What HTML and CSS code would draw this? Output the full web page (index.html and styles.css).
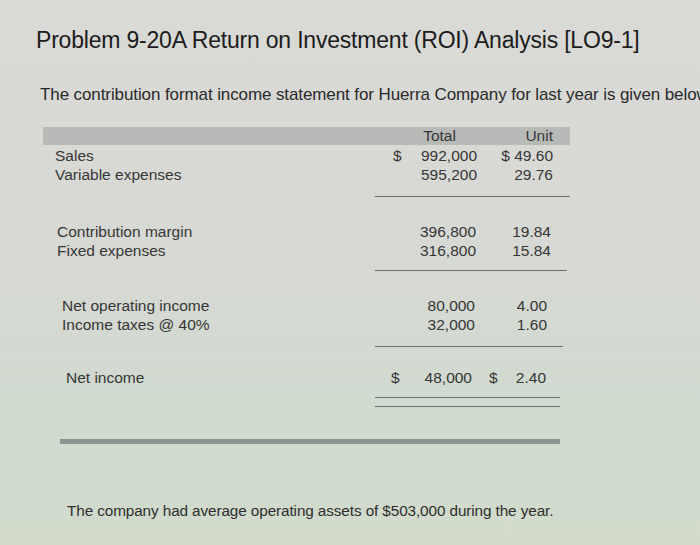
FILE: index.html
```html
<!DOCTYPE html>
<html lang="en">
<head>
<meta charset="utf-8">
<title>Problem 9-20A</title>
<link rel="stylesheet" href="styles.css">
</head>
<body>
<div class="page">
  <h1 class="title">Problem 9-20A Return on Investment (ROI) Analysis [LO9-1]</h1>
  <p class="intro">The contribution format income statement for Huerra Company for last year is given below:</p>

  <div class="statement">
    <div class="section s1">
      <div class="row head">
        <span class="label"></span>
        <span class="cur"></span>
        <span class="total center">Total</span>
        <span class="unit">Unit</span>
      </div>
      <div class="row">
        <span class="label">Sales</span>
        <span class="cur">$</span>
        <span class="total">992,000</span>
        <span class="unit">$ 49.60</span>
      </div>
      <div class="row">
        <span class="label">Variable expenses</span>
        <span class="cur"></span>
        <span class="total">595,200</span>
        <span class="unit">29.76</span>
      </div>
      <div class="rule r1"></div>
    </div>

    <div class="section s2">
      <div class="row">
        <span class="label">Contribution margin</span>
        <span class="cur"></span>
        <span class="total">396,800</span>
        <span class="unit">19.84</span>
      </div>
      <div class="row">
        <span class="label">Fixed expenses</span>
        <span class="cur"></span>
        <span class="total">316,800</span>
        <span class="unit">15.84</span>
      </div>
      <div class="rule r2"></div>
    </div>

    <div class="section s3">
      <div class="row">
        <span class="label">Net operating income</span>
        <span class="cur"></span>
        <span class="total">80,000</span>
        <span class="unit">4.00</span>
      </div>
      <div class="row">
        <span class="label">Income taxes @ 40%</span>
        <span class="cur"></span>
        <span class="total">32,000</span>
        <span class="unit">1.60</span>
      </div>
      <div class="rule r3"></div>
    </div>

    <div class="section s4">
      <div class="row">
        <span class="label">Net income</span>
        <span class="cur">$</span>
        <span class="total">48,000</span>
        <span class="unit split"><span>$</span><span>2.40</span></span>
      </div>
      <div class="rule double"></div>
    </div>

    <div class="thick"></div>
  </div>

  <p class="note">The company had average operating assets of $503,000 during the year.</p>
</div>
</body>
</html>
```

FILE: styles.css
```css
html, body {
  margin: 0;
  padding: 0;
  height: 100%;
  overflow: hidden;
}

body {
  background: linear-gradient(180deg, #d9d9d6 0%, #d8d9d5 35%, #d4d9d1 60%, #cfdbcf 80%, #d2dbcb 100%);
  font-family: "Liberation Sans", Arial, sans-serif;
  color: #2e2e2e;
}

.page {
  width: 700px;
  height: 545px;
  padding: 0;
  box-sizing: border-box;
}

.title {
  margin: 0;
  padding: 25px 0 0 36px;
  font-size: 23px;
  font-weight: normal;
  line-height: 30px;
  color: #1c1c1c;
  white-space: nowrap;
  letter-spacing: -0.2px;
}

.intro {
  margin: 0;
  padding: 30px 0 0 40px;
  font-size: 17px;
  line-height: 20px;
  color: #2a2a2a;
  white-space: nowrap;
  letter-spacing: -0.1px;
}

.statement {
  margin: 22px 0 0 43px;
  width: 527px;
  font-size: 15.5px;
  color: #363636;
}

.row {
  display: grid;
  grid-template-columns: 345px 14px 75px 76px 17px;
  height: 19px;
  line-height: 19px;
  white-space: nowrap;
}

.row .total,
.row .unit {
  text-align: right;
}

.row .center {
  text-align: center;
}

.head {
  background: #b8bab8;
  height: 18px;
  line-height: 17px;
  margin-bottom: 1px;
}

.s1 .label { padding-left: 12px; }
.s2 .label { padding-left: 14px; }
.s3 .label { padding-left: 19px; }
.s4 .label { padding-left: 23px; }

.s1 .cur { padding-left: 5px; }
.s4 .cur { padding-left: 3px; }

.s2 .total { padding-right: 1px; }
.s2 .unit { padding-right: 2px; }
.s3 .total { padding-right: 2px; }
.s3 .unit { padding-right: 6px; }
.s4 .total { padding-right: 5px; }

.split {
  display: flex;
  justify-content: space-between;
  padding-left: 12px;
  padding-right: 7px;
}

.rule {
  margin-left: 332px;
  height: 0;
  border-top: 1.5px solid #6d716d;
}

.r1 { margin-top: 12px; width: 195px; }
.r2 { margin-top: 10px; width: 192px; }
.r3 { margin-top: 12px; width: 188px; }

.section.s2 { margin-top: 25px; }
.section.s3 { margin-top: 25px; }
.section.s4 { margin-top: 21px; }

.double {
  margin-top: 10px;
  width: 185px;
  height: 8px;
  border-bottom: 1.5px solid #6d716d;
}

.thick {
  margin: 32px 0 0 17px;
  width: 500px;
  height: 5px;
  background: #8c9690;
}

.note {
  margin: 0;
  padding: 58px 0 0 67px;
  font-size: 15.3px;
  line-height: 18px;
  color: #2e2e2e;
  white-space: nowrap;
  letter-spacing: -0.1px;
}
```
